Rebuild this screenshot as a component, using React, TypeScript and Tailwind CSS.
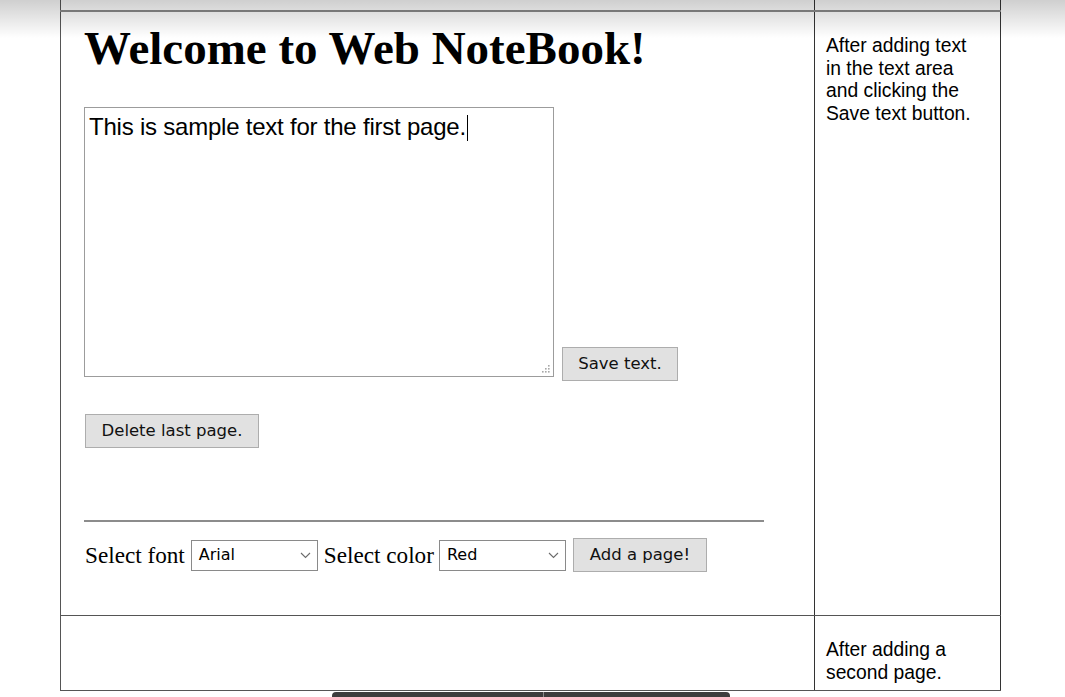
import React from "react";

function Chevron() {
  return (
    <svg width="11" height="7" viewBox="0 0 11 7" className="shrink-0">
      <path d="M1 1 L5.5 5.5 L10 1" fill="none" stroke="#6b6b6b" strokeWidth="1.1" />
    </svg>
  );
}

function Grip() {
  return (
    <svg width="12" height="12" viewBox="0 0 12 12" className="absolute right-[2px] bottom-[2px]">
      {[
        [9, 3],
        [6, 6],
        [9, 6],
        [3, 9],
        [6, 9],
        [9, 9],
      ].map(([x, y], i) => (
        <rect key={i} x={x} y={y} width="1.6" height="1.6" fill="#a8a8a8" />
      ))}
    </svg>
  );
}

function Btn({ children, className = "" }: { children: React.ReactNode; className?: string }) {
  return (
    <div
      className={
        "flex items-center justify-center h-[34px] bg-[#e1e1e1] border border-[#adadad] text-[16.5px] text-[#111] font-['DejaVu_Sans',sans-serif] " +
        className
      }
    >
      {children}
    </div>
  );
}

function Select({ value }: { value: string }) {
  return (
    <div className="flex items-center justify-between w-[127px] h-[31px] border border-[#8a8a8a] bg-white pl-[7px] pr-[6px] text-[16px] text-black font-['DejaVu_Sans',sans-serif]">
      <span>{value}</span>
      <Chevron />
    </div>
  );
}

export default function App() {
  return (
    <div className="relative w-[1065px] h-[697px] overflow-hidden bg-white">
      <div className="ml-[60px] w-[941px] flex flex-col">
        <div className="flex h-[10px]">
          <div className="w-[754px] border-l border-[#555]" />
          <div className="w-[187px] border-l border-r border-[#333]" />
        </div>
        <div className="flex h-[605px] border-t-2 border-[#8a8a8a]">
          <div className="w-[754px] border-l border-[#555] pl-[23px] pt-[10px]">
            <h1 className="text-[47px] leading-[53px] font-bold text-black font-['Liberation_Serif',serif]">
              Welcome to Web NoteBook!
            </h1>
            <div className="flex items-start gap-[8px] mt-[32px]">
              <div className="relative w-[470px] h-[270px] border border-[#9c9c9c] pl-[4px] pt-[5px] text-[24px] leading-[28px] tracking-[-0.22px] text-black font-['Liberation_Sans',sans-serif]">
                This is sample text for the first page.
                <span className="inline-block w-[1.5px] h-[26px] bg-black align-[-6px] ml-[1px]" />
                <Grip />
              </div>
              <Btn className="w-[116px] mt-[240px]">Save text.</Btn>
            </div>
            <Btn className="w-[174px] ml-[1px] mt-[33px]">Delete last page.</Btn>
            <div className="w-[680px] h-[2px] bg-[#8c8c8c] mt-[72px]" />
            <div className="flex items-center h-[34px] mt-[16px] text-[23.2px] text-black font-['Liberation_Serif',serif]">
              <span className="ml-[1px]">Select font</span>
              <div className="ml-[6px]">
                <Select value="Arial" />
              </div>
              <span className="ml-[6px]">Select color</span>
              <div className="ml-[5px]">
                <Select value="Red" />
              </div>
              <Btn className="w-[134px] ml-[7px]">Add a page!</Btn>
            </div>
          </div>
          <div className="w-[187px] border-l border-r border-[#333] pl-[11px] pt-[23px] text-[19.3px] leading-[22.5px] text-black font-['Liberation_Sans',sans-serif]">
            After adding text
            <br />
            in the text area
            <br />
            and clicking the
            <br />
            Save text button.
          </div>
        </div>
        <div className="flex h-[76px] border-t border-b border-[#555]">
          <div className="w-[754px] border-l border-[#555]" />
          <div className="w-[187px] border-l border-r border-[#333] pl-[11px] pt-[23px] text-[19.3px] leading-[22.5px] text-black font-['Liberation_Sans',sans-serif]">
            After adding a
            <br />
            second page.
          </div>
        </div>
      </div>

      <div className="pointer-events-none absolute left-0 top-0 w-full h-[38px] bg-[linear-gradient(to_bottom,rgba(0,0,0,0.19),rgba(0,0,0,0))]" />

      <div className="absolute left-[332px] top-[692px] w-[398px] h-[8px] bg-[#3d3d3d] rounded-t-[4px]">
        <div className="absolute left-[211px] top-0 w-[1px] h-full bg-[#8a8a8a]" />
      </div>
    </div>
  );
}
